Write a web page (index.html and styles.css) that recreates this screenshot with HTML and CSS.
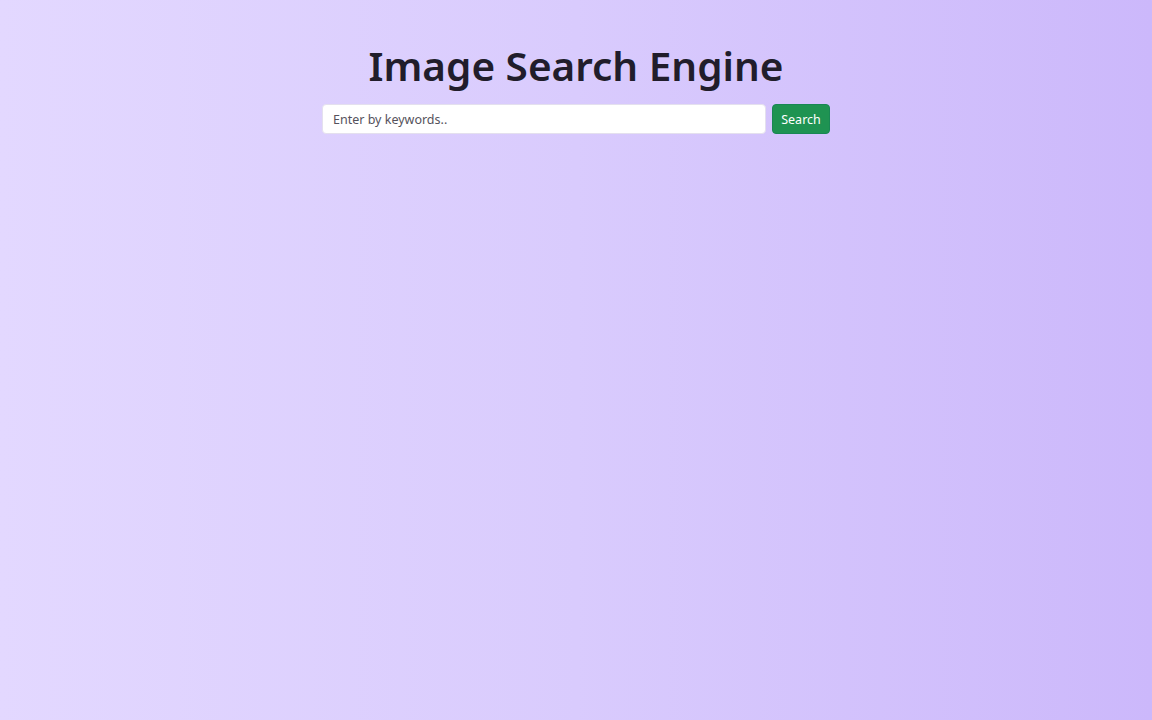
FILE: index.html
```html
<!DOCTYPE html>
<html lang="en">
<head>
<meta charset="utf-8">
<title>Image Search Engine</title>
<link rel="stylesheet" href="styles.css">
</head>
<body>
<main class="page">
  <h1 class="title">Image Search Engine</h1>
  <form class="search">
    <input class="search-input" type="text" placeholder="Enter by keywords..">
    <button class="search-btn" type="button">Search</button>
  </form>
</main>
</body>
</html>
```

FILE: styles.css
```css
html, body {
  margin: 0;
  height: 100%;
}
body {
  background: linear-gradient(90deg, #e3d8ff 0%, #d9cbfd 50%, #ccb8fb 100%);
  font-family: "Noto Sans", "Open Sans", sans-serif;
  color: #212529;
}
.page {
  display: flex;
  flex-direction: column;
  align-items: center;
  padding-top: 38px;
}
.title {
  margin: 0 0 10px;
  font-size: 40.5px;
  font-weight: 600;
  line-height: 56px;
  color: #211d2b;
}
.search {
  display: flex;
  gap: 6px;
}
.search-input {
  box-sizing: border-box;
  width: 444px;
  height: 30px;
  padding: 0 10px;
  border: 1px solid #e4e0ee;
  border-radius: 4px;
  background: #fff;
  font-family: inherit;
  font-size: 12.5px;
  color: #212529;
  outline: none;
}
.search-input::placeholder {
  color: #55525c;
}
.search-btn {
  box-sizing: border-box;
  width: 58px;
  height: 30px;
  padding: 0;
  border: 1px solid #198754;
  border-radius: 4px;
  background: #1f9352;
  color: #fff;
  font-family: inherit;
  font-size: 12.5px;
  cursor: pointer;
}
```
